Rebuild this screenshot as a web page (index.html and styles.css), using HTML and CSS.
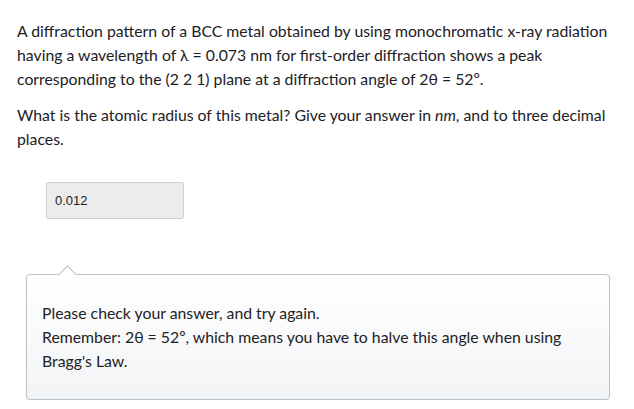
FILE: index.html
```html
<!DOCTYPE html>
<html>
<head>
<meta charset="utf-8">
<link rel="stylesheet" href="styles.css">
</head>
<body>
<div class="question">
  <p class="qtext">A diffraction pattern of a BCC metal obtained by using monochromatic x-ray radiation having a wavelength of λ = 0.073 nm for first-order diffraction shows a peak corresponding to the (2 2 1) plane at a diffraction angle of 2θ = 52º.</p>
  <p class="qtext">What is the atomic radius of this metal? Give your answer in <em>nm</em>, and to three decimal places.</p>
  <div class="answer-row">
    <div class="answer-input">0.012</div>
  </div>
  <div class="feedback">
    <p class="fb-line">Please check your answer, and try again.</p>
    <p class="fb-line">Remember: 2θ = 52º, which means you have to halve this angle when using Bragg's Law.</p>
  </div>
</div>
</body>
</html>
```
FILE: styles.css
```css
html, body {
  margin: 0;
  padding: 0;
  background: #ffffff;
}
.question {
  padding: 19px 20px 0 17px;
  font-family: Lato, "Open Sans", sans-serif;
  font-size: 15.8px;
  line-height: 24px;
  color: #1d2125;
}
.qtext {
  margin: 0 0 12px 0;
}
.answer-row {
  padding: 19px 0 0 29px;
}
.answer-input {
  box-sizing: border-box;
  width: 138px;
  height: 37px;
  border: 1px solid #cfcfcf;
  border-radius: 2px;
  background: #ececec;
  font-family: "Liberation Sans", Arial, sans-serif;
  font-size: 13px;
  line-height: 35px;
  padding: 0 0 0 8px;
  color: #1d2125;
}
.feedback {
  position: relative;
  margin: 55px 0 0 9px;
  width: 584px;
  height: 126px;
  box-sizing: border-box;
  border: 1px solid #b9c0c8;
  border-radius: 4px;
  background: linear-gradient(#ffffff, #f3f4f6);
  box-shadow: 0 1px 1px rgba(0,0,0,0.08);
  padding: 26px 40px 0 15px;
}
.feedback::before {
  content: "";
  position: absolute;
  left: 34px;
  top: -7px;
  width: 12px;
  height: 12px;
  background: #ffffff;
  border-left: 1px solid #b9c0c8;
  border-top: 1px solid #b9c0c8;
  transform: rotate(45deg);
}
.fb-line {
  margin: 0;
}
```
